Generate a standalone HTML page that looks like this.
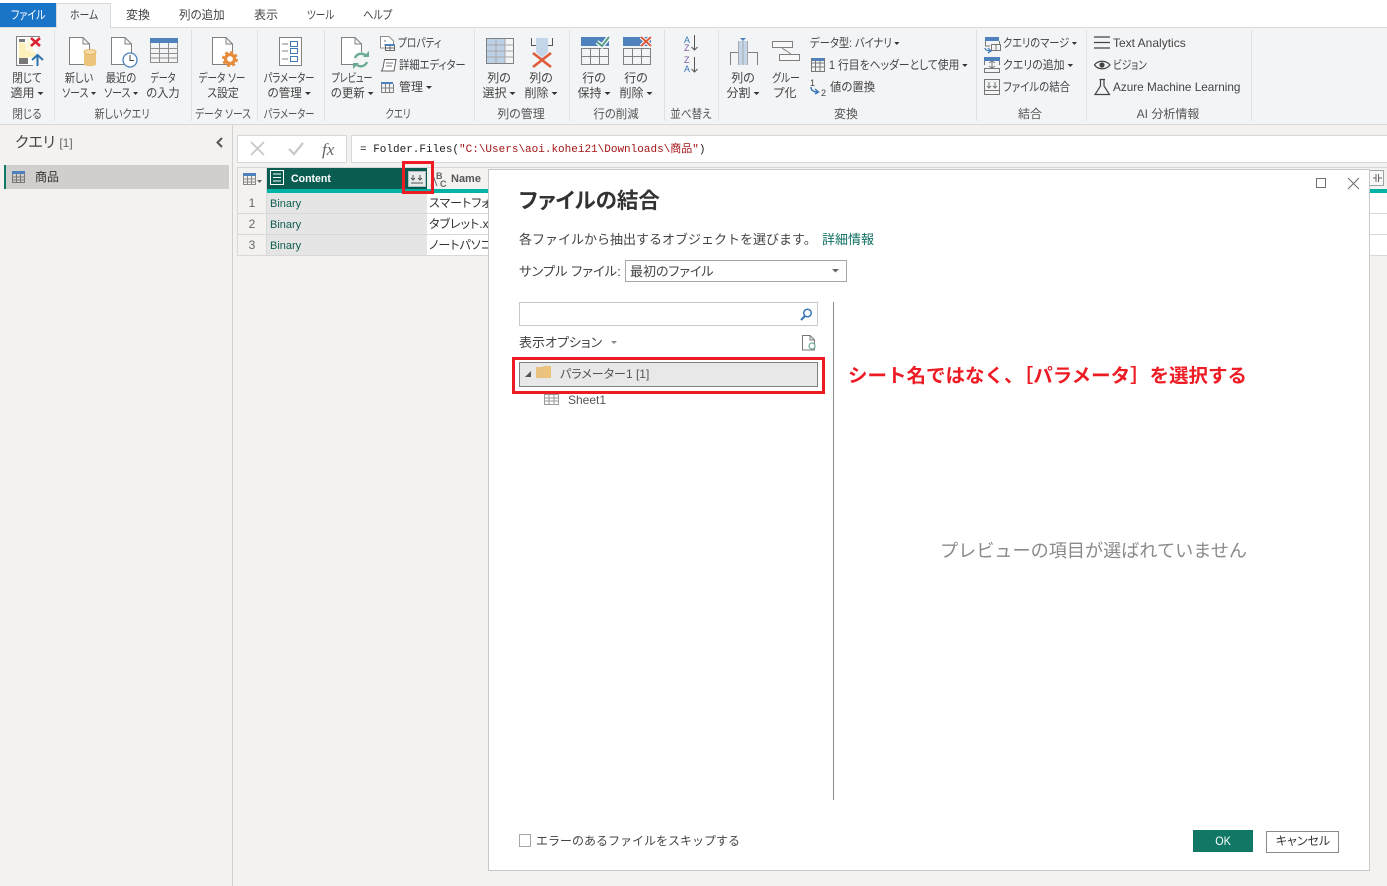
<!DOCTYPE html>
<html lang="ja"><head><meta charset="utf-8"><title>ファイルの結合</title>
<style>
html,body{margin:0;padding:0;width:1387px;height:886px;overflow:hidden;background:#f3f2f1}
body{position:relative;font-family:"Liberation Sans","Noto Sans CJK JP",sans-serif;font-size:12px;color:#444;font-feature-settings:"palt"}
.b{position:absolute;box-sizing:border-box}
.t{position:absolute;white-space:nowrap;line-height:14px;height:14px;transform-origin:0 50%}
.c{translate:-50% 0;transform-origin:50% 50%}
.n{font-feature-settings:normal}
svg{position:absolute;left:0;top:0}
.ar:after{content:"";display:inline-block;border:3px solid transparent;border-top:3px solid #333;border-bottom:0;margin-left:3px;vertical-align:2px}
.g{color:#555}
</style></head><body>

<!-- ribbon bg -->
<div class="b" style="left:0;top:0;width:1387px;height:28px;background:#fff;border-bottom:1px solid #d9d9d9"></div>
<div class="b" style="left:0;top:28px;width:1387px;height:97px;background:#f3f4f6;border-bottom:1px solid #d9d9d9"></div>
<div class="b" style="left:0;top:3px;width:56px;height:24px;background:#1a75c9"></div>
<div class="b" style="left:56px;top:3px;width:55px;height:25px;background:#f3f4f6;border:1px solid #d9d9d9;border-bottom:0"></div>
<div class="t" style="left:11px;top:8px;color:#fff;scale:.83 1">ファイル</div>
<div class="t" style="left:70px;top:8px;scale:.82 1">ホーム</div>
<div class="t" style="left:126px;top:8px">変換</div>
<div class="t" style="left:179px;top:8px;scale:.96 1">列の追加</div>
<div class="t" style="left:254px;top:8px">表示</div>
<div class="t" style="left:307px;top:8px;scale:.8 1">ツール</div>
<div class="t" style="left:363px;top:8px;scale:.85 1">ヘルプ</div>

<!-- large buttons -->
<div class="t c" style="left:27px;top:71px;scale:.88 1">閉じて</div><div class="t c ar" style="left:27px;top:86px">適用</div>
<div class="t c" style="left:79px;top:71px;scale:.85 1">新しい</div><div class="t c ar" style="left:79px;top:86px;scale:.83 1">ソース</div>
<div class="t c" style="left:121px;top:71px;scale:.86 1">最近の</div><div class="t c ar" style="left:121px;top:86px;scale:.83 1">ソース</div>
<div class="t c" style="left:163px;top:71px;scale:.75 1">データ</div><div class="t c" style="left:163px;top:86px;scale:.94 1">の入力</div>
<div class="t c" style="left:222px;top:71px;scale:.8 1">データ ソー</div><div class="t c" style="left:223px;top:86px;scale:.91 1">ス設定</div>
<div class="t c" style="left:289px;top:71px;scale:.77 1">パラメーター</div><div class="t c ar" style="left:289px;top:86px;scale:.96 1">の管理</div>
<div class="t c" style="left:352px;top:71px;scale:.75 1">プレビュー</div><div class="t c ar" style="left:352px;top:86px;scale:.95 1">の更新</div>
<div class="t" style="left:398px;top:36px;scale:.81 1">プロパティ</div>
<div class="t" style="left:399px;top:58px;scale:.86 1">詳細エディター</div>
<div class="t ar" style="left:399px;top:80px">管理</div>
<div class="t c" style="left:499px;top:71px">列の</div><div class="t c ar" style="left:499px;top:86px">選択</div>
<div class="t c" style="left:541px;top:71px">列の</div><div class="t c ar" style="left:541px;top:86px">削除</div>
<div class="t c" style="left:594px;top:71px">行の</div><div class="t c ar" style="left:594px;top:86px">保持</div>
<div class="t c" style="left:636px;top:71px">行の</div><div class="t c ar" style="left:636px;top:86px">削除</div>
<div class="t c" style="left:743px;top:71px">列の</div><div class="t c ar" style="left:743px;top:86px">分割</div>
<div class="t c" style="left:786px;top:71px;scale:.82 1">グルー</div><div class="t c" style="left:785px;top:86px">プ化</div>
<div class="t ar" style="left:810px;top:36px;scale:.86 1">データ型: バイナリ</div>
<div class="t ar" style="left:829px;top:58px;scale:.9 1">1 行目をヘッダーとして使用</div>
<div class="t" style="left:830px;top:80px;scale:.95 1">値の置換</div>
<div class="t ar" style="left:1003px;top:36px;scale:.85 1">クエリのマージ</div>
<div class="t ar" style="left:1003px;top:58px;scale:.91 1">クエリの追加</div>
<div class="t" style="left:1003px;top:80px;scale:.87 1">ファイルの結合</div>
<div class="t" style="left:1113px;top:36px">Text Analytics</div>
<div class="t" style="left:1113px;top:58px;scale:.8 1">ビジョン</div>
<div class="t" style="left:1113px;top:80px;scale:.98 1">Azure Machine Learning</div>

<!-- group labels -->
<div class="t c g" style="left:27px;top:107px;scale:.88 1">閉じる</div>
<div class="t c g" style="left:122px;top:107px;scale:.84 1">新しいクエリ</div>
<div class="t c g" style="left:223px;top:107px;scale:.81 1">データ ソース</div>
<div class="t c g" style="left:289px;top:107px;scale:.77 1">パラメーター</div>
<div class="t c g" style="left:398px;top:107px;scale:.78 1">クエリ</div>
<div class="t c g" style="left:521px;top:107px">列の管理</div>
<div class="t c g" style="left:616px;top:107px;scale:.95 1">行の削減</div>
<div class="t c g" style="left:691px;top:107px;scale:.88 1">並べ替え</div>
<div class="t c g" style="left:846px;top:107px">変換</div>
<div class="t c g" style="left:1030px;top:107px">結合</div>
<div class="t c g" style="left:1168px;top:107px">AI 分析情報</div>

<!-- left pane -->
<div class="b" style="left:232px;top:125px;width:1px;height:761px;background:#d0d0d0"></div>
<div class="t" style="left:15px;top:135px;font-size:15px;line-height:16px;height:16px">クエリ <span style="font-size:12px;color:#666">[1]</span></div>
<div class="b" style="left:4px;top:165px;width:225px;height:24px;background:#d0cfcd;border-left:2px solid #0f7b66"></div>
<div class="t" style="left:35px;top:170px;color:#333">商品</div>

<!-- formula -->
<div class="b" style="left:237px;top:135px;width:110px;height:28px;background:#fff;border:1px solid #d8d8d8"></div>
<div class="b" style="left:351px;top:135px;width:1036px;height:28px;background:#fff;border:1px solid #d8d8d8;border-right:0"></div>
<div class="t" style="left:322px;top:141px;font-family:'Liberation Serif',serif;font-style:italic;font-size:17px;line-height:17px;height:17px;color:#666">fx</div>
<div class="t n" style="left:360px;top:143px;font-family:'Liberation Mono','Noto Sans CJK JP',monospace;font-size:11px;color:#222">= Folder.Files(<span style="color:#a31515">"C:\Users\aoi.kohei21\Downloads\商品"</span>)</div>

<!-- table -->
<div class="b" style="left:237px;top:167px;width:1150px;height:1px;background:#d8d8d8"></div>
<div class="b" style="left:237px;top:168px;width:30px;height:88px;border:1px solid #d8d8d8;border-top:0;background:#f3f2f1"></div>
<div class="b" style="left:267px;top:168px;width:160px;height:21px;background:#0b5c50"></div>
<div class="b" style="left:267px;top:189px;width:1120px;height:4px;background:#00b3a4"></div>
<div class="b" style="left:267px;top:193px;width:160px;height:63px;background:#e5e5e5"></div>
<div class="b" style="left:427px;top:193px;width:960px;height:63px;background:#fff"></div>
<div class="b" style="left:237px;top:213px;width:1150px;height:1px;background:#d8d8d8"></div>
<div class="b" style="left:237px;top:234px;width:1150px;height:1px;background:#d8d8d8"></div>
<div class="b" style="left:237px;top:255px;width:1150px;height:1px;background:#d8d8d8"></div>
<div class="t" style="left:291px;top:172px;color:#fff;font-weight:bold;font-size:11px;scale:.96 1">Content</div>
<div class="t" style="left:451px;top:172px;color:#555;font-weight:bold;font-size:11px">Name</div>
<div class="t c" style="left:252px;top:196px;color:#666">1</div>
<div class="t c" style="left:252px;top:217px;color:#666">2</div>
<div class="t c" style="left:252px;top:238px;color:#666">3</div>
<div class="t" style="left:270px;top:197px;font-size:11px;color:#0f5c50">Binary</div>
<div class="t" style="left:270px;top:218px;font-size:11px;color:#0f5c50">Binary</div>
<div class="t" style="left:270px;top:239px;font-size:11px;color:#0f5c50">Binary</div>
<div class="t" style="left:429px;top:196px;color:#333">スマートフォン.xlsx</div>
<div class="t" style="left:429px;top:217px;color:#333">タブレット.xlsx</div>
<div class="t" style="left:429px;top:238px;color:#333">ノートパソコン.xlsx</div>

<!-- dialog -->
<div class="b" style="left:488px;top:169px;width:882px;height:702px;background:#fff;border:1px solid #c8c8c8"></div>
<div class="t" style="left:519px;top:189px;font-size:21.500px;line-height:24px;height:24px;font-weight:bold;color:#333">ファイルの結合</div>
<div class="t n" style="left:519px;top:233px;font-size:13px;color:#444">各ファイルから抽出するオブジェクトを選びます。</div>
<div class="t" style="left:822px;top:233px;font-size:13px;color:#0f6f62">詳細情報</div>
<div class="t" style="left:519px;top:265px;font-size:13px;color:#444;scale:1.02 1">サンプル ファイル:</div>
<div class="b" style="left:625px;top:260px;width:222px;height:22px;border:1px solid #a6a6a6;background:#fff"></div>
<div class="t" style="left:630px;top:265px;font-size:13px;color:#444">最初のファイル</div>
<div class="b" style="left:519px;top:302px;width:299px;height:24px;border:1px solid #c8c8c8;background:#fff"></div>
<div class="t" style="left:519px;top:336px;font-size:13px;color:#444">表示オプション</div>
<div class="b" style="left:519px;top:362px;width:299px;height:25px;background:#e8e8e8;border:1px solid #808080"></div>
<div class="t" style="left:560px;top:367px;color:#555">パラメーター1 [1]</div>
<div class="t" style="left:568px;top:393px;color:#555">Sheet1</div>
<div class="b" style="left:833px;top:302px;width:1px;height:498px;background:#8a8a8a"></div>
<div class="t n" style="left:848px;top:366px;font-size:19px;line-height:22px;height:22px;font-weight:bold;color:#ed1c24;scale:1.026 1">シート名ではなく、［パラメータ］を選択する</div>
<div class="t n" style="left:940px;top:540px;font-size:18px;line-height:22px;height:22px;color:#8a8a8a;scale:1.007 1">プレビューの項目が選ばれていません</div>
<div class="b" style="left:519px;top:834px;width:12px;height:13px;border:1px solid #a6a6a6;background:#fff"></div>
<div class="t n" style="left:536px;top:834px;color:#444">エラーのあるファイルをスキップする</div>
<div class="b" style="left:1193px;top:830px;width:60px;height:22px;background:#117865"></div>
<div class="t c" style="left:1223px;top:834px;color:#fff;scale:.9 1">OK</div>
<div class="b" style="left:1266px;top:831px;width:73px;height:22px;border:1px solid #8a8a8a;background:#fff"></div>
<div class="t c" style="left:1303px;top:834px;color:#333">キャンセル</div>

<svg width="1387" height="886" viewBox="0 0 1387 886" fill="none">
<!-- ribbon separators -->
<g stroke="#e0e1e3"><path d="M54.500 30V121M191.500 30V121M257.500 30V121M324.500 30V121M474.500 30V121M569.500 30V121M664.500 30V121M718.500 30V121M976.500 30V121M1086.500 30V121M1251.500 30V121"/></g>

<!-- close & apply -->
<path d="M40 36.500H16.500V65.500H33" stroke="#808080" fill="#fff"/><path d="M19 43H26V50L37 56V57H28V58H19Z" fill="#fdf0b8"/><path d="M19 39H25V42H19ZM19 58H28V64H19Z" fill="#777"/><path d="M27 36V56H37" fill="#fdf0b8" opacity=".6"/>
<path d="M31 38L40 46M40 38L31 46" stroke="#d9232e" stroke-width="2.600"/>
<path d="M37.500 66V55M32 60L37.500 55L43 60" stroke="#2f73ad" stroke-width="2"/>

<!-- new source -->
<path d="M69.500 37.500H83L89.500 44V64.500H69.500ZM83 37.500V44H89.500" stroke="#808080" fill="#fff"/>
<path d="M84 52V64C84 67 96 67 96 64V52Z" fill="#edc47b"/><ellipse cx="90" cy="52" rx="6" ry="2.500" fill="#f5dca9" stroke="#e4b563"/>
<!-- recent -->
<path d="M111.500 37.500H125L131.500 44V64.500H111.500ZM125 37.500V44H131.500" stroke="#808080" fill="#fff"/>
<circle cx="130" cy="60" r="7" stroke="#4f81bd" stroke-width="1.300" fill="#fff"/><path d="M130 55V60.500H134" stroke="#444"/>
<!-- enter data -->
<path d="M150 38H178V43H150Z" fill="#4f81bd"/><path d="M150.500 43V62.500H177.500V43M150 48.500H178M150 53.500H178M150 58H178M159.500 43V62M168.500 43V62" stroke="#909090"/>

<!-- data source -->
<path d="M212.500 37.500H226L232.500 44V64.500H212.500ZM226 37.500V44H232.500" stroke="#808080" fill="#fff"/>
<circle cx="230" cy="59" r="4.500" stroke="#e58b3a" stroke-width="3.200" fill="#fff"/><circle cx="230" cy="59" r="7" stroke="#e58b3a" stroke-width="2" stroke-dasharray="3 2.500"/>
<!-- params -->
<path d="M279.500 37.500H301.500V65.500H279.500Z" stroke="#808080" fill="#fff"/>
<path d="M290.500 41.500H297.500V46.500H290.500ZM290.500 48.500H297.500V53.500H290.500ZM290.500 56.500H297.500V61.500H290.500Z" stroke="#3f7cb8"/><path d="M282 44H288M282 51H288M282 59H288" stroke="#808080"/>

<!-- refresh preview -->
<path d="M341.500 37.500H355L361.500 44V64.500H341.500ZM355 37.500V44H361.500" stroke="#808080" fill="#fff"/>
<circle cx="361" cy="60" r="8" fill="#f3f4f6"/><path d="M355 58A6.500 6.500 0 0 1 366 56M367 62A6.500 6.500 0 0 1 356 64" stroke="#6cab93" stroke-width="2.400"/><path d="M363 57H369V51ZM359 63H353V69Z" fill="#6cab93"/>
<!-- properties -->
<path d="M380.500 36.500H389L393.500 41V48H380.500Z" stroke="#909090" fill="#fff"/><path d="M384 41H386M384 45H386" stroke="#777"/>
<path d="M385 44H395V50H385Z" fill="#fff"/><path d="M385 44H395V46H385Z" fill="#4f81bd"/><path d="M385.500 46V50.500H394.500V46M385 48H395M390 46V50" stroke="#666"/>
<!-- advanced editor -->
<path d="M384.500 59.500H396L394 71H381.500L383 68Z" stroke="#606060" fill="#fff"/><path d="M386 63H393M386 66H392" stroke="#777"/>
<!-- manage -->
<path d="M381 82H393V84H381Z" fill="#4f81bd"/><path d="M381.500 84V92.500H393.500V84M381 88H394M385.500 84V92M389.500 84V92" stroke="#808080"/>

<!-- choose cols -->
<path d="M487 39H505V63H487Z" fill="#bcd0e6"/><path d="M486.500 38.500H513.500V63.500H486.500Z" stroke="#808080"/><path d="M487 45H513M487 51H513M487 57H513M505 39V63M496 39V63" stroke="#a9a9a9"/>
<!-- remove cols -->
<path d="M536 38H548V52L542 58L536 52Z" fill="#c3d5e8"/><path d="M531.500 38V45.500H536M552.500 38V45.500H548" stroke="#555"/>
<path d="M533 53L551 67M551 53L533 67" stroke="#dd5c3a" stroke-width="2.600"/>
<!-- keep rows -->
<path d="M581 37H609V46H581Z" fill="#4f81bd"/><path d="M581.500 48.500H608.500V64.500H581.500ZM581 56.500H609M590.500 48V64M599.500 48V64" stroke="#808080"/>
<path d="M597 42L602 46L609 37" stroke="#fff" stroke-width="4.500"/><path d="M597 42L602 46L609 37" stroke="#5fa08d" stroke-width="2.200"/>
<!-- remove rows -->
<path d="M623 37H651V46H623Z" fill="#4f81bd"/><path d="M623.500 48.500H650.500V64.500H623.500ZM623 56.500H651M632.500 48V64M641.500 48V64" stroke="#808080"/>
<path d="M641 37L651 46M651 37L641 46" stroke="#fff" stroke-width="4"/><path d="M641 37L651 46M651 37L641 46" stroke="#dd5c3a" stroke-width="2"/>
<!-- sort -->
<g font-family="Liberation Sans" font-size="9"><text x="684" y="43" fill="#3a77b5">A</text><text x="684" y="51" fill="#7b5aa6">Z</text><text x="684" y="63" fill="#7b5aa6">Z</text><text x="684" y="72" fill="#3a77b5">A</text></g>
<path d="M694.500 35V50M691.500 47L694.500 50L697.500 47M694.500 57V72M691.500 69L694.500 72L697.500 69" stroke="#555"/>
<!-- split -->
<path d="M738 41H748V65H738Z" fill="#c3d5e8"/><path d="M738.500 41V65M747.500 41V65M743 41V65" stroke="#a9a9a9"/><path d="M740 38H746L743 41Z" fill="#4f81bd"/><path d="M730.500 65V52.500H738M757.500 65V52.500H748" stroke="#808080"/>
<!-- group by -->
<path d="M772.500 41.500H792.500V47.500H772.500ZM779.500 54.500H799.500V60.500H779.500ZM782 48L791 54" stroke="#808080" fill="#f8f8f8"/>
<!-- data type icons -->
<path d="M811 58H825V61H811Z" fill="#4f81bd"/><path d="M811.500 58V71.500H824.500V58M811 63H825M811 67H825M815.500 60V71M820 60V71" stroke="#777"/>
<text x="810" y="86" font-family="Liberation Sans" font-size="9" fill="#444">1</text><text x="821" y="96" font-family="Liberation Sans" font-size="9" fill="#444">2</text><path d="M811 87C811 91 814 92 818 92M815 89L818.500 92L815 94" stroke="#3a77b5" stroke-width="1.400"/>
<!-- merge / append / combine -->
<path d="M985 37H999V41H985Z" fill="#4f81bd"/><path d="M985.500 41V46H990M999.500 41V44" stroke="#777"/><path d="M991.500 44.500H1000.500V50.500H991.500ZM996 44V50" stroke="#777"/><path d="M985 48C985 50 988 51 991 51M988 48L991 51L988 53" stroke="#3a77b5" stroke-width="1.200"/>
<path d="M984 57H1000V61H984Z" fill="#4f81bd"/><path d="M984.500 61V65M999.500 61V65M984 68.500H1000M984.500 68V72.500H999.500V68M992 61V68M989 63L992 61L995 63M989 66L992 68L995 66" stroke="#777"/>
<path d="M984.500 79.500H999.500V94.500H984.500Z" stroke="#777"/><path d="M984 90.500H1000M989 82V88M987 86L989 88L991 86M995 82V88M993 86L995 88L997 86" stroke="#777"/>
<!-- AI icons -->
<path d="M1094 37H1110M1094 42.500H1110M1094 48H1110" stroke="#444" stroke-width="1.200"/>
<path d="M1094.500 65C1098 60 1106 60 1110 65C1106 70 1098 70 1094.500 65Z" stroke="#444" stroke-width="1.200"/><circle cx="1102" cy="65" r="2.600" fill="#444"/>
<path d="M1099.500 79.500H1105M1100.500 80V86L1095 94.500H1109.500L1104 86V80" stroke="#444" stroke-width="1.200"/>

<!-- left pane icons -->
<path d="M12 171H25V174H12Z" fill="#4f81bd"/><path d="M12.500 174V182.500H24.500V174M12 177H25M12 180H25M16.500 174V182M20.500 174V182" stroke="#777"/>
<path d="M222 138L217.500 142.500L222 147" stroke="#555" stroke-width="2"/>
<!-- formula buttons -->
<path d="M251 142L264 155M264 142L251 155" stroke="#c8c8c8" stroke-width="1.800"/><path d="M289 149L294 154L303 143" stroke="#c8c8c8" stroke-width="2.200"/>
<!-- table header -->
<path d="M243 173H256V176H243Z" fill="#4f81bd"/><path d="M243.500 176V184.500H255.500V176M243 179H256M243 182H256M247.500 176V184M251.500 176V184" stroke="#888"/><path d="M257 180H262L259.500 183Z" fill="#666"/>
<path d="M270.500 170.500H283.500V184.500H270.500Z" stroke="#fff"/><path d="M273 174H281M273 177.500H281M273 181H281" stroke="#fff"/>
<path d="M408.500 171.500H425.500V186.500H408.500Z" fill="#e8ebec" stroke="#b4c0c0"/><path d="M413 175V180M411 178L413 180L415 178M420 175V180M418 178L420 180L422 178M411 183H423" stroke="#555"/>
<path d="M431 186L434 178L437 186" stroke="#666"/><text x="436" y="179" font-family="Liberation Sans" font-size="9" font-weight="bold" fill="#666">B</text><text x="440" y="187" font-family="Liberation Sans" font-size="9" font-weight="bold" fill="#666">C</text>
<!-- right column button -->
<path d="M1370 170.500H1383.500V185.500H1370" fill="#f8f8f8" stroke="#9aa4a6"/><path d="M1373 178H1376M1376 174V182M1378.500 174V182M1378.500 178H1382" stroke="#666"/>
<!-- dialog controls -->
<path d="M1316.500 178.500H1325.500V187.500H1316.500Z" stroke="#707070"/><path d="M1348 178L1359 189M1359 178L1348 189" stroke="#707070" stroke-width="1.100"/>
<path d="M832 269H839L835.500 272.500Z" fill="#666"/>
<circle cx="807.500" cy="313" r="3.800" stroke="#3a77b5" stroke-width="1.500"/><path d="M805 316L801 320" stroke="#3a77b5" stroke-width="2"/>
<path d="M611 341H617L614 344Z" fill="#888"/>
<path d="M802.500 335.500H810L814.500 340V350H802.500ZM810 335.500V340H814.500" stroke="#777" fill="#fff"/><circle cx="812" cy="346" r="3" stroke="#6cab93" stroke-width="1.200" fill="#fff"/>
<path d="M525 377L531 377L531 371Z" fill="#555"/>
<path d="M536 367H543L544 369V378H536Z" fill="#e9c27f"/><path d="M543 366H551V378H544Z" fill="#edc47b"/>
<path d="M544.500 394.500H558.500V404.500H544.500ZM544 398H559M544 401H559M549 394V405M554 394V405" stroke="#999"/>
<!-- red annotation rects -->
<rect x="403.500" y="162.500" width="29" height="30" stroke="#ed1c24" stroke-width="3"/>
<rect x="513.500" y="358.500" width="310" height="34" stroke="#ed1c24" stroke-width="3"/>
</svg>
</body></html>
